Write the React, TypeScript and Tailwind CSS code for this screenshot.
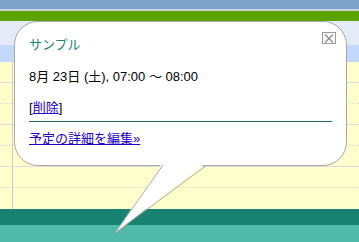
const font = { fontFamily: '"Liberation Sans", "Noto Sans CJK JP", sans-serif' };

function Row({ dotted }: { dotted?: boolean }) {
  return (
    <div
      className={`h-[21px] border-b border-[#dcdcdc] ${dotted ? "border-dotted" : "border-solid"}`}
    />
  );
}

export default function App() {
  return (
    <div className="relative w-[359px] h-[242px] overflow-hidden bg-white" style={font}>
      <div className="flex flex-col">
        <div className="h-[9px] bg-[#7fa2c8]" />
        <div className="h-[2px] bg-[#c9d6e6]" />
        <div className="h-[10px] bg-[#5aa300]" />
        <div className="h-[24px] bg-[#e4ebf6]" />
        <div className="h-[17px] bg-[#c3d9fb]" />
        <div className="flex h-[147px] bg-[#ffffcc]">
          <div className="w-[13px] border-r border-[#cccccc]">
            <Row /><Row dotted /><Row /><Row dotted /><Row /><Row dotted />
          </div>
          <div className="flex-1">
            <Row /><Row dotted /><Row /><Row dotted /><Row /><Row dotted />
          </div>
        </div>
        <div className="h-[16px] bg-[#188271]" />
        <div className="h-[18px] bg-[#52baab]" />
      </div>

      {/* bubble */}
      <div className="absolute left-[14px] top-[21px] w-[333px] h-[145px] rounded-[24px] border-[1.5px] border-[#a8a8a8] bg-white">
        <div className="absolute right-[10px] top-[10px] w-[14px] h-[12px] border border-[#9a9a9a] flex items-center justify-center">
          <svg width="10" height="9" viewBox="0 0 10 9">
            <path d="M1 0.5 L9 8.5 M9 0.5 L1 8.5" stroke="#8a8a8a" strokeWidth="1.2" />
          </svg>
        </div>
        <div className="pl-[14px] pr-[14px] pt-[15px] text-[13px] leading-[16px]">
          <div className="text-[#1c8576]">サンプル</div>
          <div className="mt-[16px] text-black">8月 23日 (土), 07:00 ～ 08:00</div>
          <div className="mt-[15px] text-black">
            [<a href="#" className="text-[#2200cc] underline">削除</a>]
          </div>
          <div className="mt-[5px] h-px bg-[#1d6e60]" />
          <div className="mt-[9px]">
            <a href="#" className="text-[#2200cc] underline">予定の詳細を編集»</a>
          </div>
        </div>
      </div>

      {/* tail */}
      <svg className="absolute left-0 top-0 pointer-events-none" width="359" height="242">
        <polygon points="163,162 115,233 207,162" fill="#ffffff" />
        <polyline points="163,165 115,233 207,165" fill="none" stroke="#aaaaaa" strokeWidth="1" />
      </svg>
    </div>
  );
}
